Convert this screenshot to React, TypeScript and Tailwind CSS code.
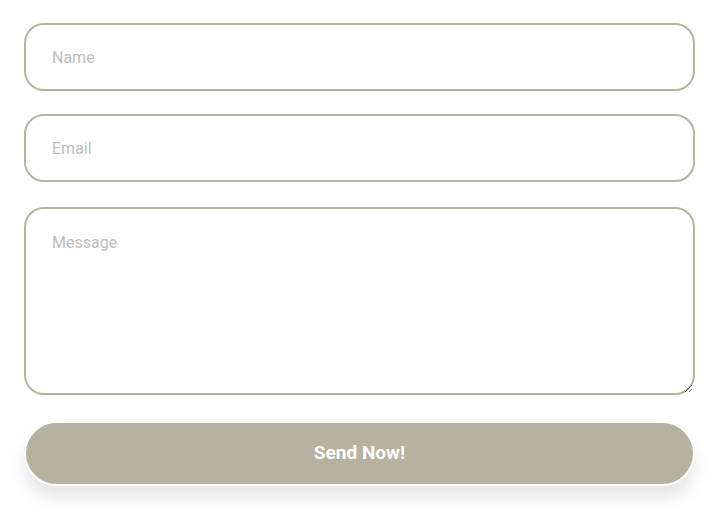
import { FC } from "react";

const fieldClass =
  "w-full rounded-[20px] border-2 border-[#b5b3a3] bg-white px-[26px] text-base text-[#555] outline-none placeholder:text-[#bdbdbd]";

const App: FC = () => {
  return (
    <div className="min-h-screen bg-white" style={{ fontFamily: "Roboto, 'Liberation Sans', sans-serif" }}>
      <form className="flex flex-col px-6 pt-[23px] w-[719px]">
        <input type="text" placeholder="Name" className={`${fieldClass} h-[68px]`} />
        <input type="text" placeholder="Email" className={`${fieldClass} h-[68px] mt-[23px]`} />
        <textarea placeholder="Message" className={`${fieldClass} h-[188px] mt-[25px] pt-[22px]`} />
        <button
          type="button"
          className="mt-[26px] h-[65px] w-full rounded-full border-2 border-white bg-[#b5b2a0] text-[19px] font-bold text-white shadow-[0_12px_16px_rgba(0,0,0,0.1)]"
        >
          Send Now!
        </button>
      </form>
    </div>
  );
};

export default App;
